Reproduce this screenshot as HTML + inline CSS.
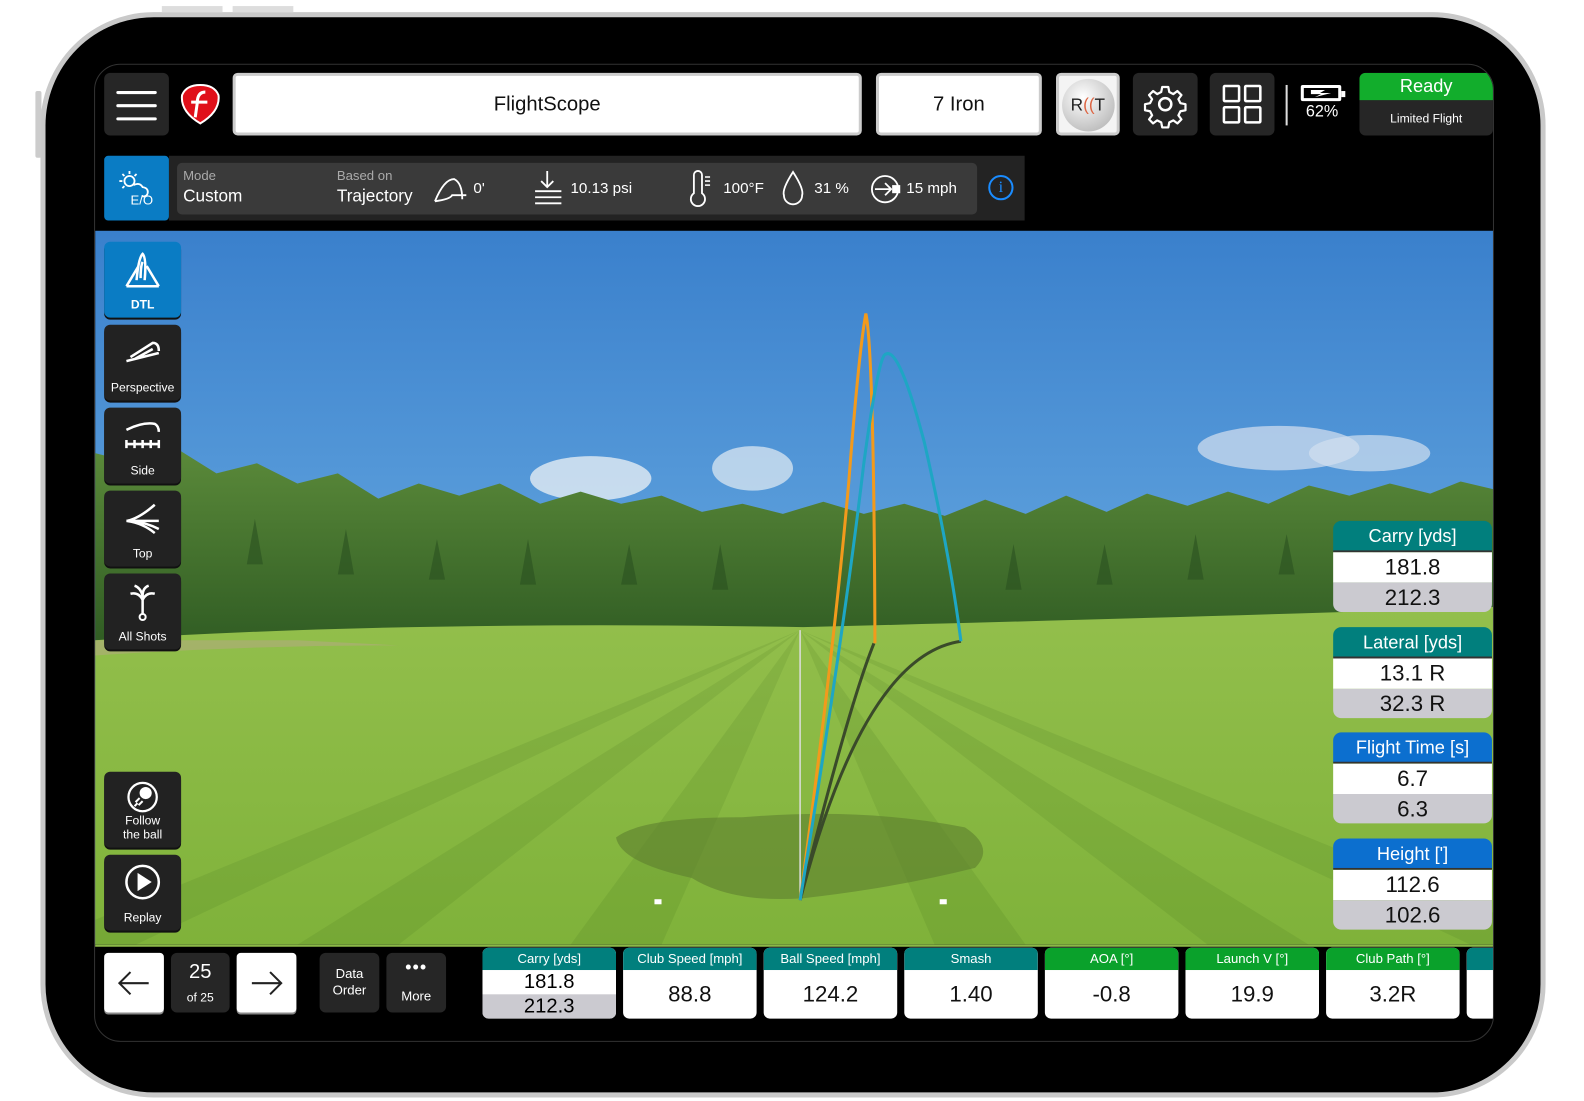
<!DOCTYPE html>
<html><head><meta charset="utf-8"><style>
*{margin:0;padding:0;box-sizing:border-box}
html,body{width:1584px;height:1101px;overflow:hidden}
body{background:#fff;position:relative;font-family:"Liberation Sans",Arial,sans-serif}
#wrap{position:absolute;left:0;top:0;width:1584px;height:1101px;overflow:hidden;transform:scale(1.0115);transform-origin:0 0}
.abs{position:absolute}
.dev{left:40px;top:12px;width:1488px;height:1073px;border-radius:112px;background:#000;border:5px solid #c9c9c9}
.scr{left:93px;top:63px;width:1384px;height:967px;border-radius:26px;background:#000;overflow:hidden;border:1px solid #333}
.btn{background:#262626;border-radius:6px}
.lb{left:9px;width:76px;height:75px;background:#222;border-radius:6px;color:#fff;font-size:12px;text-align:center;box-shadow:0 2px 0 #111}
.lb svg{display:block;margin:8px auto 0}
.lb span{position:absolute;bottom:6px;left:0;right:0}
.rp{left:1224px;width:157px}
.rp .h{height:31px;color:#fff;font-size:18px;text-align:center;line-height:31px;border-radius:8px 8px 0 0;border-bottom:2px solid #333}
.rp .a{height:30px;background:#fff;font-size:22px;text-align:center;line-height:30px;color:#111}
.rp .b{height:29px;background:#cbcad0;font-size:22px;text-align:center;line-height:29px;color:#111;border-radius:0 0 8px 8px}
.dc{top:873px;width:132px;height:70px;background:#fff;border-radius:6px;overflow:hidden}
.dc .h{height:22px;color:#fff;font-size:13px;text-align:center;line-height:22px}
.dc .v{font-size:22px;text-align:center;line-height:48px;color:#111}
.t{background:#017f7d}.g{background:#0aa12b}.bl{background:#0c6fcf}
</style></head><body><div id="wrap">
<div class="abs dev"></div>
<div class="abs" style="left:35px;top:90px;width:6px;height:66px;background:#ccc;border-radius:2px"></div>
<div class="abs" style="left:160px;top:6px;width:60px;height:6px;background:#ddd"></div>
<div class="abs" style="left:230px;top:6px;width:60px;height:6px;background:#ddd"></div>
<div class="abs scr">
 <div class="abs" style="left:0;top:164px;width:1384px;height:706px;overflow:hidden">
  <svg width="1384" height="706" viewBox="0 0 1384 706">
   <defs>
    <linearGradient id="sky" x1="0" y1="0" x2="0" y2="1"><stop offset="0" stop-color="#3a80cc"/><stop offset="0.5" stop-color="#5fa2dd"/><stop offset="1" stop-color="#a4c8e6"/></linearGradient>
    <linearGradient id="gr" x1="0" y1="0" x2="0" y2="1"><stop offset="0" stop-color="#93bf4c"/><stop offset="1" stop-color="#7fb23a"/></linearGradient>
    <linearGradient id="tr" x1="0" y1="0" x2="0" y2="1"><stop offset="0" stop-color="#5b8a3a"/><stop offset="1" stop-color="#2e5a22"/></linearGradient>
   </defs>
   <rect width="1384" height="706" fill="url(#sky)"/>
   <ellipse cx="490" cy="245" rx="60" ry="22" fill="#e4ecf4" opacity=".8"/>
   <ellipse cx="650" cy="235" rx="40" ry="22" fill="#e4ecf4" opacity=".7"/>
   <ellipse cx="1170" cy="215" rx="80" ry="22" fill="#c6d7ec" opacity=".8"/>
   <ellipse cx="1260" cy="220" rx="60" ry="18" fill="#d2e0f0" opacity=".7"/>
   <path d="M0 220 L40 230 80 215 120 240 160 230 200 250 240 240 280 265 320 250 360 262 400 250 440 270 480 258 520 270 560 262 600 278 640 270 680 280 720 268 760 280 800 270 840 282 880 266 920 280 960 262 1000 278 1040 260 1080 272 1120 258 1160 270 1200 252 1240 262 1280 250 1320 260 1350 248 1384 256 L1384 400 L0 420Z" fill="url(#tr)"/>
   <g fill="#2a5020" opacity=".6"><path d="M60 320 l8-40 8 40z M150 330 l8-45 8 45z M240 340 l8-45 8 45z M330 345 l8-40 8 40z M420 350 l8-45 8 45z M520 350 l8-40 8 40z M610 355 l8-45 8 45z M900 355 l8-45 8 45z M990 350 l8-40 8 40z M1080 345 l8-45 8 45z M1170 340 l8-40 8 40z M1260 335 l8-45 8 45z"/></g>
   <path d="M0 405 Q300 385 700 392 Q1100 382 1384 372 L1384 706 L0 706Z" fill="url(#gr)"/>
   <path d="M0 405 L0 420 Q150 410 300 410 L200 405Z" fill="#b8a888" opacity=".5"/>
   <g opacity=".1" fill="#2c5a10">
    <path d="M697 395 L560 706 L470 706Z"/><path d="M697 395 L300 706 L200 706Z"/><path d="M697 395 L830 706 L920 706Z"/><path d="M697 395 L1100 706 L1200 706Z"/><path d="M697 395 L40 706 L-60 706Z"/><path d="M697 395 L1360 706 L1460 706Z"/>
   </g>
   <path d="M515 600 Q540 580 640 580 Q760 570 860 590 Q890 610 870 630 Q790 650 700 660 Q630 665 590 640 Q520 625 515 600Z" fill="#5e7f2e" opacity=".6"/>
   <line x1="697" y1="395" x2="697" y2="660" stroke="#ddd" stroke-width="1.5"/>
   <rect x="553" y="661" width="7" height="5" fill="#fff"/><rect x="835" y="661" width="7" height="5" fill="#fff"/>
   <path d="M697 662 Q745 470 770 408" stroke="#3a4a2a" stroke-width="3" fill="none"/>
   <path d="M697 662 Q760 420 856 406" stroke="#3a4a2a" stroke-width="3" fill="none"/>
   <path d="M697 662 Q730 420 745 250 Q755 120 762 82 Q770 120 771 408" stroke="#f29a1c" stroke-width="3" fill="none"/>
   <path d="M697 662 Q740 400 760 230 Q775 120 782 122 Q795 115 820 210 Q845 320 856 406" stroke="#1ea6c4" stroke-width="3" fill="none"/>
  </svg>
 </div>
 <div class="abs btn" style="left:9px;top:8px;width:64px;height:62px">
  <div class="abs" style="left:12px;top:18px;width:40px;height:3px;background:#fff;border-radius:2px;box-shadow:0 13px 0 #fff,0 26px 0 #fff"></div></div>
 <svg class="abs" style="left:84px;top:18px" width="40" height="42" viewBox="0 0 40 42"><path d="M20 2 Q34 2 38 12 Q40 28 20 40 Q0 28 2 12 Q6 2 20 2Z" fill="#e0101a" stroke="#fff" stroke-width="2"/><path d="M25 9 Q17 9 17 20 L15 34 M11 19 L27 19" stroke="#fff" stroke-width="3" fill="none"/></svg>
 <div class="abs" style="left:136px;top:8px;width:622px;height:62px;background:#fff;border:3px solid #ccc;border-radius:5px;font-size:20px;text-align:center;line-height:56px;color:#111">FlightScope</div>
 <div class="abs" style="left:772px;top:8px;width:164px;height:62px;background:#fff;border:3px solid #ccc;border-radius:5px;font-size:20px;text-align:center;line-height:56px;color:#111">7 Iron</div>
 <div class="abs" style="left:950px;top:8px;width:63px;height:62px;background:#f4f4f4;border:3px solid #ccc;border-radius:5px">
  <div style="margin:3px auto;width:52px;height:52px;border-radius:50%;background:radial-gradient(circle at 40% 35%,#fff,#aaa);font-size:17px;line-height:52px;text-align:center;color:#222">R<span style="color:#d64">((</span>T</div></div>
 <div class="abs btn" style="left:1026px;top:8px;width:64px;height:62px">
  <svg width="64" height="62" viewBox="0 0 64 62"><circle cx="32" cy="31" r="6" fill="none" stroke="#fff" stroke-width="2.5"/><path d="M29 14h6l1 5 4 2 4-3 4 4-3 4 2 4 5 1v6l-5 1-2 4 3 4-4 4-4-3-4 2-1 5h-6l-1-5-4-2-4 3-4-4 3-4-2-4-5-1v-6l5-1 2-4-3-4 4-4 4 3 4-2z" fill="none" stroke="#fff" stroke-width="2.2" stroke-linejoin="round"/></svg></div>
 <div class="abs btn" style="left:1102px;top:8px;width:64px;height:62px">
  <svg width="64" height="62" viewBox="0 0 64 62"><g fill="none" stroke="#fff" stroke-width="2.5"><rect x="14" y="13" width="15" height="15" rx="1"/><rect x="35" y="13" width="15" height="15" rx="1"/><rect x="14" y="34" width="15" height="15" rx="1"/><rect x="35" y="34" width="15" height="15" rx="1"/></g></svg></div>
 <div class="abs" style="left:1177px;top:20px;width:2px;height:40px;background:#ddd"></div>
 <div class="abs" style="left:1192px;top:20px;width:40px;height:16px;border:3px solid #fff;border-radius:2px"><div style="position:absolute;right:-7px;top:3px;width:4px;height:6px;background:#fff"></div></div>
 <svg class="abs" style="left:1200px;top:23px" width="24" height="10"><path d="M2 2h14l-5 3h11l-16 4 6-3H2z" fill="#fff"/></svg>
 <div class="abs" style="left:1190px;top:38px;width:46px;color:#fff;font-size:16px;text-align:center">62%</div>
 <div class="abs" style="left:1250px;top:8px;width:132px;height:62px;background:#262626;border-radius:6px;overflow:hidden">
  <div style="height:27px;background:#12ad2c;color:#fff;font-size:18px;text-align:center;line-height:27px">Ready</div>
  <div style="color:#fff;font-size:12px;text-align:center;line-height:36px">Limited Flight</div></div>
 <div class="abs" style="left:73px;top:90px;width:846px;height:64px;background:#232323"></div>
 <div class="abs" style="left:9px;top:90px;width:64px;height:64px;background:#0a7cc4;border-radius:4px">
  <svg width="64" height="64" viewBox="0 0 64 64"><g fill="none" stroke="#fff" stroke-width="1.8"><circle cx="25" cy="25" r="5"/><path d="M25 15v3M15 25h3M18 18l2 2M32 18l-2 2M18 32l2-2"/><path d="M29 29q6-3 9 2 q6 1 5 6 q-1 4-6 3"/></g><text x="26" y="48" fill="#fff" font-size="13" font-family="Liberation Sans">E/O</text></svg></div>
 <div class="abs" style="left:81px;top:97px;width:791px;height:51px;background:#3a3a3a;border-radius:5px;color:#fff">
  <div class="abs" style="left:6px;top:5px;font-size:13px;color:#aaa">Mode</div>
  <div class="abs" style="left:6px;top:23px;font-size:17px">Custom</div>
  <div class="abs" style="left:158px;top:5px;font-size:13px;color:#aaa">Based on</div>
  <div class="abs" style="left:158px;top:23px;font-size:17px">Trajectory</div>
  <svg class="abs" style="left:252px;top:10px" width="40" height="32"><path d="M3 28 Q12 6 22 6 Q30 10 30 26 M3 28 Q18 26 20 22 L34 22" fill="none" stroke="#fff" stroke-width="1.8"/></svg>
  <div class="abs" style="left:293px;top:17px;font-size:15px">0'</div>
  <svg class="abs" style="left:352px;top:6px" width="30" height="38"><path d="M14 2v16M8 12l6 6 6-6M2 22h26M2 28h26M2 34h26" fill="none" stroke="#fff" stroke-width="1.8"/></svg>
  <div class="abs" style="left:389px;top:17px;font-size:15px">10.13 psi</div>
  <svg class="abs" style="left:505px;top:6px" width="26" height="38"><path d="M6 24V6a4 4 0 018 0v18a7 7 0 11-8 0z" fill="none" stroke="#fff" stroke-width="1.8"/><path d="M17 8h5M17 12h5M17 16h5" stroke="#fff" stroke-width="1.5"/></svg>
  <div class="abs" style="left:540px;top:17px;font-size:15px">100°F</div>
  <svg class="abs" style="left:596px;top:6px" width="26" height="38"><path d="M13 3 Q24 20 22 26 a9 9 0 01-18 0 Q2 20 13 3z" fill="none" stroke="#fff" stroke-width="1.8"/></svg>
  <div class="abs" style="left:630px;top:17px;font-size:15px">31 %</div>
  <svg class="abs" style="left:684px;top:10px" width="34" height="32"><circle cx="16" cy="16" r="13" fill="none" stroke="#fff" stroke-width="1.8"/><path d="M6 16h16M16 10l6 6-6 6" fill="none" stroke="#fff" stroke-width="1.8"/><rect x="23" y="12" width="8" height="8" fill="#fff"/></svg>
  <div class="abs" style="left:721px;top:17px;font-size:15px">15 mph</div>
 </div>
 <div class="abs" style="left:883px;top:109px;width:25px;height:25px;border:2px solid #1a8cff;border-radius:50%;color:#1a8cff;text-align:center;font-size:16px;line-height:21px;font-family:'Liberation Serif',serif">i</div>
 <div class="abs lb" style="top:175px;background:#0a7cc4"><svg width="40" height="40" viewBox="0 0 40 40"><path d="M4 36 L16 16 M36 36 L24 16 M4 36h32" stroke="#fff" stroke-width="2.5" fill="none"/><path d="M14 30 Q16 8 20 4 Q24 8 22 30 M18 28 Q18 16 20 12" stroke="#fff" stroke-width="2.5" fill="none"/></svg><span style="font-weight:bold">DTL</span></div>
 <div class="abs lb" style="top:257px"><svg width="40" height="40" viewBox="0 0 40 40"><path d="M4 28 L36 20 M8 24 L30 10 Q36 10 36 18 M12 26 L30 16" stroke="#fff" stroke-width="2.5" fill="none"/></svg><span>Perspective</span></div>
 <div class="abs lb" style="top:339px"><svg width="40" height="40" viewBox="0 0 40 40"><path d="M4 14 Q20 6 32 8 Q36 10 36 16 M4 28h32 M4 24v8M12 24v8M20 24v8M28 24v8M36 24v8" stroke="#fff" stroke-width="2.5" fill="none"/></svg><span>Side</span></div>
 <div class="abs lb" style="top:421px"><svg width="40" height="40" viewBox="0 0 40 40"><path d="M4 22 Q16 20 32 6 M4 22 L36 22 M4 22 Q20 24 32 34 M10 22 Q24 24 36 30" stroke="#fff" stroke-width="2.5" fill="none"/></svg><span>Top</span></div>
 <div class="abs lb" style="top:503px"><svg width="40" height="40" viewBox="0 0 40 40"><path d="M20 32 V14 Q20 6 26 4 M20 14 Q18 6 12 4 M20 18 Q16 10 8 12 M20 18 Q24 10 32 12" stroke="#fff" stroke-width="2.5" fill="none"/><circle cx="20" cy="35" r="3" fill="none" stroke="#fff" stroke-width="2"/></svg><span>All Shots</span></div>
 <div class="abs lb" style="top:699px"><svg width="34" height="34" viewBox="0 0 34 34"><circle cx="17" cy="17" r="14" fill="none" stroke="#fff" stroke-width="2.2"/><circle cx="20" cy="13" r="6" fill="#fff"/><path d="M10 22l4-4M13 25l4-4M9 26l3-3" stroke="#fff" stroke-width="2"/></svg><span style="line-height:14px">Follow<br>the ball</span></div>
 <div class="abs lb" style="top:781px"><svg width="38" height="38" viewBox="0 0 38 38"><circle cx="19" cy="19" r="16" fill="none" stroke="#fff" stroke-width="2.5"/><path d="M14 10 L28 19 L14 28Z" fill="#fff"/></svg><span>Replay</span></div>
 <div class="abs rp" style="top:451px"><div class="h t">Carry [yds]</div><div class="a">181.8</div><div class="b">212.3</div></div>
 <div class="abs rp" style="top:556px"><div class="h t">Lateral [yds]</div><div class="a">13.1 R</div><div class="b">32.3 R</div></div>
 <div class="abs rp" style="top:660px"><div class="h bl">Flight Time [s]</div><div class="a">6.7</div><div class="b">6.3</div></div>
 <div class="abs rp" style="top:765px"><div class="h bl">Height [']</div><div class="a">112.6</div><div class="b">102.6</div></div>
 <div class="abs" style="left:0;top:870px;width:1384px;height:2px;background:#8cb848"></div>
 <div class="abs" style="left:9px;top:878px;width:59px;height:59px;background:#fff;border-radius:4px;box-shadow:0 2px 0 #888"><svg width="59" height="59"><path d="M16 30h28M26 19L15 30l11 11" fill="none" stroke="#222" stroke-width="2"/></svg></div>
 <div class="abs btn" style="left:75px;top:878px;width:58px;height:59px;color:#fff;text-align:center"><div style="font-size:20px;margin-top:8px">25</div><div style="font-size:12px;margin-top:6px">of 25</div></div>
 <div class="abs" style="left:140px;top:878px;width:59px;height:59px;background:#fff;border-radius:4px;box-shadow:0 2px 0 #888"><svg width="59" height="59"><path d="M15 30h28M33 19l11 11-11 11" fill="none" stroke="#222" stroke-width="2"/></svg></div>
 <div class="abs btn" style="left:222px;top:878px;width:59px;height:59px;color:#fff;text-align:center;font-size:13px;padding-top:13px;line-height:16px">Data<br>Order</div>
 <div class="abs btn" style="left:288px;top:878px;width:59px;height:59px;color:#fff;text-align:center;font-size:13px"><div style="font-size:18px;margin-top:4px;letter-spacing:1px">•••</div><div style="margin-top:10px">More</div></div>
 <div class="abs dc" style="left:383px"><div class="h t">Carry [yds]</div><div style="font-size:20px;text-align:center;line-height:24px">181.8</div><div style="font-size:20px;text-align:center;line-height:24px;background:#cbcad0">212.3</div></div>
 <div class="abs dc" style="left:522px"><div class="h t">Club Speed [mph]</div><div class="v">88.8</div></div>
 <div class="abs dc" style="left:661px"><div class="h t">Ball Speed [mph]</div><div class="v">124.2</div></div>
 <div class="abs dc" style="left:800px"><div class="h t">Smash</div><div class="v">1.40</div></div>
 <div class="abs dc" style="left:939px"><div class="h g">AOA [°]</div><div class="v">-0.8</div></div>
 <div class="abs dc" style="left:1078px"><div class="h g">Launch V [°]</div><div class="v">19.9</div></div>
 <div class="abs dc" style="left:1217px"><div class="h g">Club Path [°]</div><div class="v">3.2R</div></div>
 <div class="abs dc" style="left:1356px;width:28px;border-radius:6px 0 0 6px"><div class="h t">&nbsp;</div></div>
</div>
</div></body></html>
